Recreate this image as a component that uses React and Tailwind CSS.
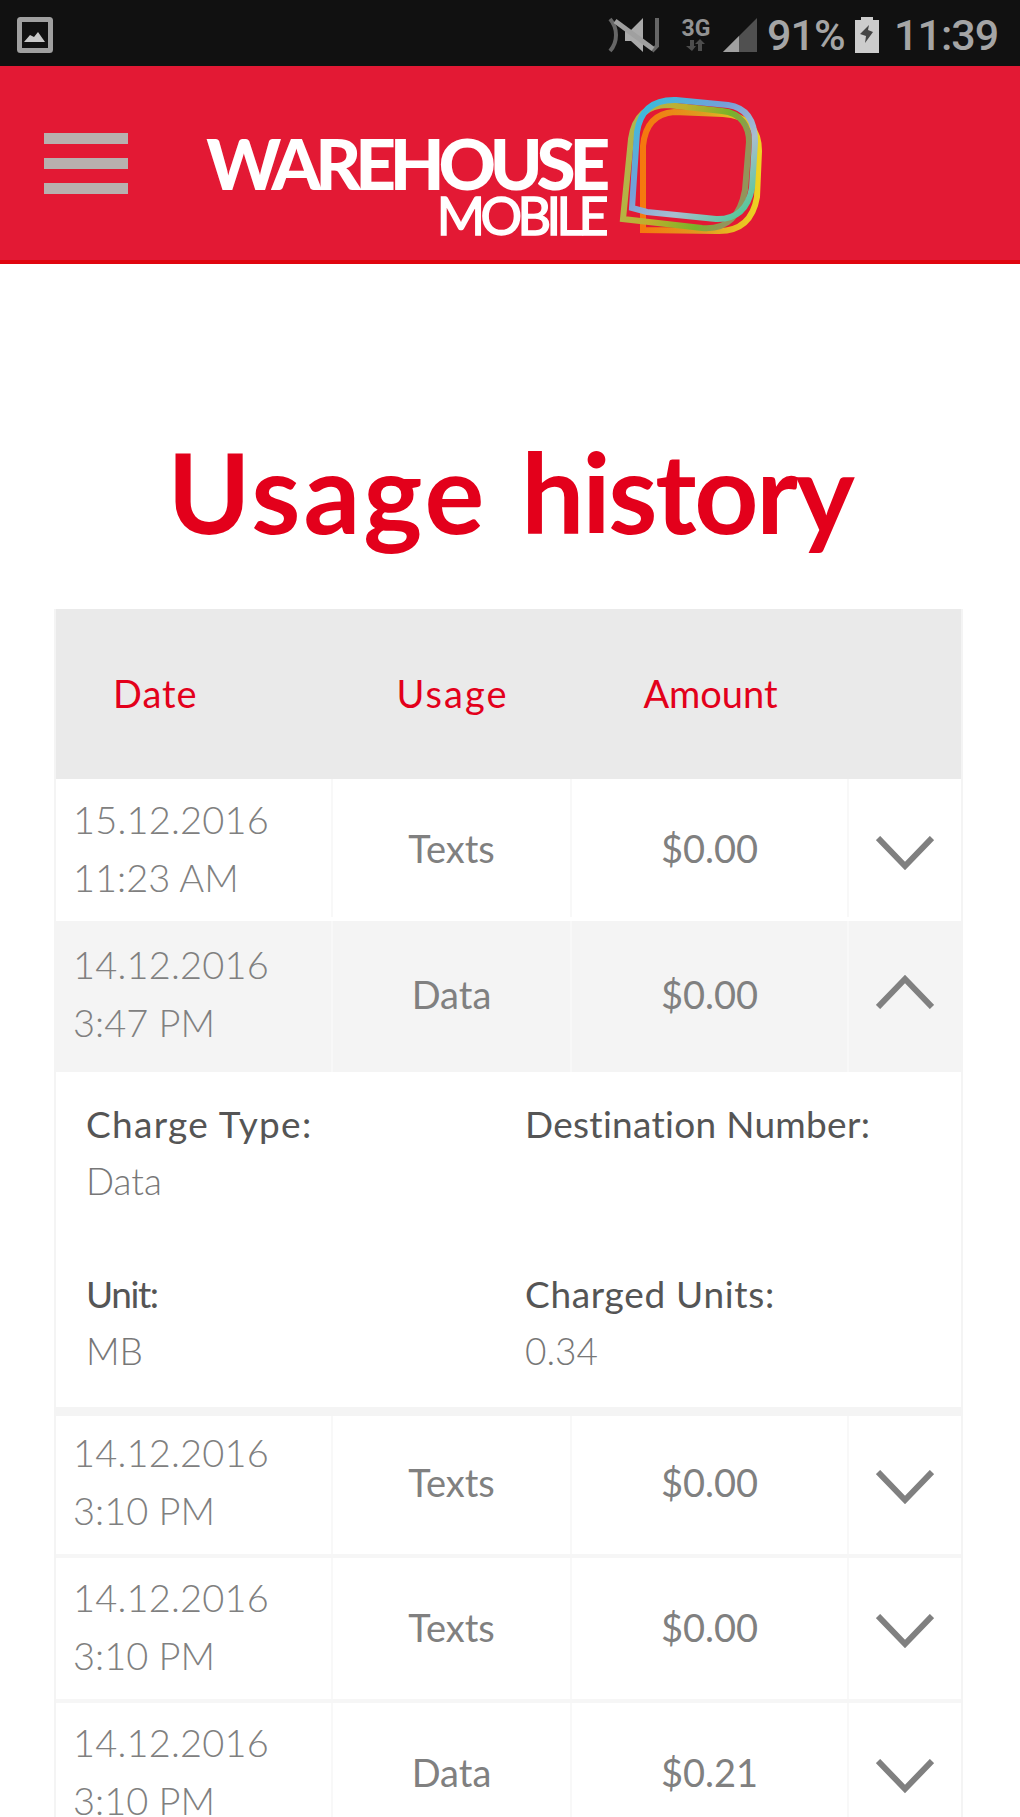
import React from 'react';

const rows = [
  { date: '15.12.2016', time: '11:23 AM', usage: 'Texts', amount: '$0.00', style: 'h-[142px] border-b-4 border-white bg-white', pad: 'pt-[11px]', cell: 'pt-[1px]', arrow: 'pt-[11px]' },
  { date: '14.12.2016', time: '3:47 PM', usage: 'Data', amount: '$0.00', style: 'h-[151px] bg-[#f4f4f4]', pad: 'pt-[14px]', cell: 'pb-[5px]', arrow: 'pb-[11px]', open: true },
  { date: '14.12.2016', time: '3:10 PM', usage: 'Texts', amount: '$0.00', style: 'h-[142px] border-b-4 border-[#f6f6f6] bg-white', pad: 'pt-[7px]', cell: 'pb-[5px]', arrow: 'pt-[6px]' },
  { date: '14.12.2016', time: '3:10 PM', usage: 'Texts', amount: '$0.00', style: 'h-[145px] border-b-4 border-[#f6f6f6] bg-white', pad: 'pt-[10px]', cell: 'pb-[2px]', arrow: 'pt-[6px]' },
  { date: '14.12.2016', time: '3:10 PM', usage: 'Data', amount: '$0.21', style: 'h-[145px] border-b-4 border-[#f6f6f6] bg-white', pad: 'pt-[10px]', cell: 'pb-[2px]', arrow: 'pt-[6px]' },
];

const details = [
  { label: 'Charge Type:', value: 'Data', tracking: 'tracking-[1.3px]' },
  { label: 'Destination Number:', value: '', tracking: 'tracking-[0.3px]' },
  { label: 'Unit:', value: 'MB', tracking: 'tracking-[-1.4px]' },
  { label: 'Charged Units:', value: '0.34', tracking: 'tracking-[0.7px]' },
];

const StatusBar = () => (
  <div className="flex h-[66px] items-center bg-[#111111] font-['Roboto',sans-serif] text-[#a5a5a5]">
    <svg className="mt-1 ml-[17px] h-9 w-9" viewBox="0 0 36 36" fill="none">
      <rect x="2.5" y="2.5" width="31" height="31" rx="1" stroke="#a0a0a0" strokeWidth="5" />
      <path d="M7 25l6-7 4 2 4-5 7 10z" fill="#c8c8c8" />
    </svg>
    <svg className="mt-1 ml-auto h-9 w-[52px]" viewBox="0 0 52 36" fill="none">
      <path d="M17 13h6l12-12v34L23 24h-6z" fill="#aaaaaa" />
      <path d="M2 2c8 9 8 23 0 32M49 1v28l-5 5" stroke="#666666" strokeWidth="4" />
      <path d="M7 4l38 28" stroke="#a0a0a0" strokeWidth="5" />
    </svg>
    <div className="ml-[20px] flex h-9 w-8 flex-col items-center pt-1">
      <span className="text-[23px] leading-5 font-bold text-[#929292]">3G</span>
      <svg className="h-3 w-5" viewBox="0 0 20 12" fill="#4d4d4d">
        <path d="M4 1v6H0l6 5 4-5H8V1zM12 12V5h-3l5-5 5 5h-3v7z" />
      </svg>
    </div>
    <svg className="mt-1 ml-[10px] h-9 w-9" viewBox="0 0 36 36">
      <path d="M35 1v34H1z" fill="#505050" />
      <path d="M17 19v16H1z" fill="#a0a0a0" />
    </svg>
    <span className="mt-1 ml-[9px] w-[84px] text-[43px] leading-none font-medium tracking-[-1px] whitespace-nowrap">91%</span>
    <svg className="mt-1 ml-[4px] h-9 w-6" viewBox="0 0 24 36">
      <path d="M6 0h12v3h6v33H0V3h6z" fill="#cccccc" />
      <path d="M14 8L5 17l6 2-1 7 8-11-5-2z" fill="#444444" />
    </svg>
    <span className="mt-1 mr-[21px] ml-[15px] w-[105px] text-[43px] leading-none font-medium tracking-[-1px] whitespace-nowrap">11:39</span>
  </div>
);

const Header = () => (
  <div className="flex h-[198px] border-b-4 border-[#e0050f] bg-[#e31934]">
    <div className="mt-[67px] ml-[44px] flex w-[84px] flex-col gap-[14px]">
      <div className="h-[11px] bg-[#b8b0ae]" />
      <div className="h-[11px] bg-[#b8b0ae]" />
      <div className="h-[11px] bg-[#b8b0ae]" />
    </div>
    <div className="mt-[71px] ml-[84px] flex w-[395px] flex-col items-end text-white">
      <div className="mr-[3px] h-[55px] text-[71px] leading-[52px] font-black tracking-[-6.2px] whitespace-nowrap">WAREHOUSE</div>
      <div className="mr-[3px] text-[52px] leading-[46px] tracking-[-4.6px] [-webkit-text-stroke:1.5px_white]">MOBILE</div>
    </div>
    <svg className="mt-[27px] ml-[12px] h-[146px] w-[146px]" viewBox="0 0 146 146" fill="none" strokeWidth="6">
      <defs>
        <linearGradient id="blue" x1="0" y1="0" x2="1" y2="1">
          <stop offset="0" stopColor="#2fc0dc" />
          <stop offset="0.4" stopColor="#779fd8" />
          <stop offset="0.65" stopColor="#a9bdd0" />
          <stop offset="1" stopColor="#42c98b" />
        </linearGradient>
        <linearGradient id="green" x1="0" y1="0" x2="1" y2="0.3">
          <stop offset="0" stopColor="#a9b85a" />
          <stop offset="0.45" stopColor="#c0ae2d" />
          <stop offset="0.8" stopColor="#78b329" />
          <stop offset="1" stopColor="#93945a" />
        </linearGradient>
        <linearGradient id="orange" x1="0" y1="0" x2="1" y2="0">
          <stop offset="0" stopColor="#f5780f" />
          <stop offset="0.5" stopColor="#df9a20" />
          <stop offset="1" stopColor="#edd323" />
        </linearGradient>
      </defs>
      <path d="M24 137L24 53Q27 21 55 19L104 21C130 22 140 38 140 58L138 104Q132 139 98 138Z" stroke="url(#orange)" />
      <path d="M4 126L12 46Q17 12 49 12L103 18C123 20 130 34 130 49L126 97C121 124 108 137 83 135Z" stroke="url(#green)" />
      <path d="M13 115L18 39Q23 6 57 7L109 12C130 15 136 31 136 49L133 95Q127 127 97 126L28 119Z" stroke="url(#blue)" />
    </svg>
  </div>
);

const Chevron = ({ open }) => (
  <svg className="h-9 w-[58px]" viewBox="0 0 58 36" fill="none" stroke="#808080" strokeWidth="6">
    <path d={open ? 'M2 34L29 6L56 34' : 'M2 2L29 30L56 2'} />
  </svg>
);

const UsageRow = ({ row }) => (
  <div className={`grid grid-cols-[277px_239px_277px_1fr] text-[38px] text-[#808080] ${row.style}`}>
    <div className={`border-r-2 border-[#f8f8f8] pl-[17px] leading-[58px] font-light ${row.pad}`}>
      <div className="tracking-[0.2px]">{row.date}</div>
      <div>{row.time}</div>
    </div>
    <div className={`flex items-center justify-center border-r-2 border-[#f8f8f8] ${row.cell}`}>{row.usage}</div>
    <div className={`flex items-center justify-center border-r-2 border-[#f8f8f8] ${row.cell}`}>{row.amount}</div>
    <div className={`flex items-center justify-center ${row.arrow}`}><Chevron open={row.open} /></div>
  </div>
);

const UsageDetails = () => (
  <div className="grid h-[344px] grid-cols-[439px_1fr] grid-rows-[170px_1fr] border-b-[9px] border-[#f4f4f4] pt-[23px] pl-[30px] text-[37px] leading-[57px]">
    {details.map((item) => (
      <div key={item.label}>
        <div className={`text-[#555555] ${item.tracking}`}>{item.label}</div>
        <div className="font-light text-[#777777]">{item.value}</div>
      </div>
    ))}
  </div>
);

const App = () => (
  <div className="h-[1817px] w-[1020px] overflow-hidden bg-white font-['Lato',sans-serif]">
    <StatusBar />
    <Header />
    <h1 className="flex h-[345px] justify-center gap-[34px] pt-[157px] text-[112px] leading-[140px] font-bold text-[#e3001b]">
      <span className="tracking-[3px]">Usage</span>
      <span className="tracking-[-2.3px]">history</span>
    </h1>
    <div className="mr-[57px] ml-[54px] border-x-2 border-[#f4f4f4]">
      <div className="grid h-[170px] grid-cols-[277px_239px_277px_1fr] items-center bg-[#eaeaea] pb-[2px] text-[38px] text-[#e3001b]">
        <div className="pl-[57px] tracking-[1px]">Date</div>
        <div className="text-center tracking-[2px]">Usage</div>
        <div className="text-center">Amount</div>
      </div>
      {rows.map((row, index) => (
        <React.Fragment key={index}>
          <UsageRow row={row} />
          {row.open && <UsageDetails />}
        </React.Fragment>
      ))}
    </div>
  </div>
);

export default App;
